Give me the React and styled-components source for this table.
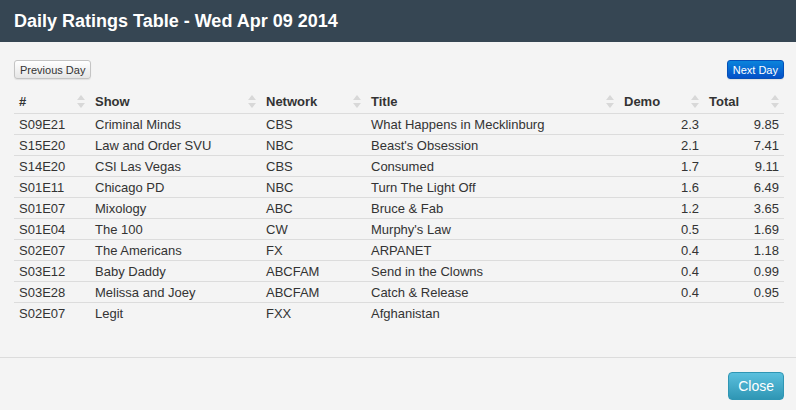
import React from 'react'
import styled, { createGlobalStyle } from 'styled-components'

const GlobalStyle = createGlobalStyle`
  html, body {
    margin: 0;
    padding: 0;
    background: #f4f4f4;
    font-family: "Liberation Sans", Arial, sans-serif;
  }
`

const Modal = styled.div`
  width: 796px;
  height: 410px;
  background: #f4f4f4;
  display: flex;
  flex-direction: column;
  overflow: hidden;
`

const Header = styled.div`
  height: 42px;
  background: #364653;
  display: flex;
  align-items: center;
  padding: 0 14px;
  box-sizing: border-box;
`

const Title = styled.h3`
  margin: 0;
  color: #fff;
  font-size: 18px;
  font-weight: bold;
`

const Body = styled.div`
  padding: 18px 12px 0 14px;
  height: 316px;
  box-sizing: border-box;
  border-bottom: 1px solid #dcdcdc;
`

const NavRow = styled.div`
  display: flex;
  justify-content: space-between;
  align-items: center;
  margin-bottom: 10px;
`

const NavButton = styled.button`
  font-family: "Liberation Sans", Arial, sans-serif;
  font-size: 11px;
  height: 19px;
  padding: 0 5px;
  border-radius: 3px;
  cursor: pointer;
  border: 1px solid ${p => (p.primary ? '#0550b8' : '#c4c4c4')};
  color: ${p => (p.primary ? '#fff' : '#333')};
  background: ${p =>
    p.primary
      ? 'linear-gradient(#0a84dc, #0450c8)'
      : 'linear-gradient(#ffffff, #e6e6e6)'};
  box-shadow: 0 1px 1px rgba(0, 0, 0, 0.08);
`

const Table = styled.table`
  width: 770px;
  border-collapse: collapse;
  table-layout: fixed;
  font-size: 13px;
  color: #333;
`

const Th = styled.th`
  text-align: left;
  font-size: 13px;
  font-weight: bold;
  color: #333;
  height: 24px;
  padding: 0 5px;
  border-bottom: 1px solid #dcdcdc;
  vertical-align: middle;
`

const ThInner = styled.div`
  display: flex;
  align-items: center;
  justify-content: space-between;
`

const Td = styled.td`
  height: 20px;
  padding: 0 5px;
  text-align: ${p => (p.num ? 'right' : 'left')};
  border-bottom: ${p => (p.last ? 'none' : '1px solid #dcdcdc')};
  white-space: nowrap;
`

const Footer = styled.div`
  flex: 1;
  display: flex;
  justify-content: flex-end;
  align-items: flex-start;
  padding: 14px 12px 0 0;
`

const CloseButton = styled.button`
  font-family: "Liberation Sans", Arial, sans-serif;
  font-size: 14px;
  color: #fff;
  height: 28px;
  padding: 0 9px;
  border: 1px solid #2f96b4;
  border-radius: 4px;
  background: linear-gradient(#5bc0de, #2f96b4);
  cursor: pointer;
`

const SortIcon = () => (
  <svg width="8" height="13" viewBox="0 0 8 13">
    <path d="M4 0 L8 5 L0 5 Z" fill="#d8d8d8" />
    <path d="M4 13 L8 8 L0 8 Z" fill="#d8d8d8" />
  </svg>
)

const columns = [
  { label: '#', width: 76 },
  { label: 'Show', width: 171 },
  { label: 'Network', width: 105 },
  { label: 'Title', width: 253 },
  { label: 'Demo', width: 85 },
  { label: 'Total', width: 80 },
]

const rows = [
  ['S09E21', 'Criminal Minds', 'CBS', 'What Happens in Mecklinburg', '2.3', '9.85'],
  ['S15E20', 'Law and Order SVU', 'NBC', "Beast's Obsession", '2.1', '7.41'],
  ['S14E20', 'CSI Las Vegas', 'CBS', 'Consumed', '1.7', '9.11'],
  ['S01E11', 'Chicago PD', 'NBC', 'Turn The Light Off', '1.6', '6.49'],
  ['S01E07', 'Mixology', 'ABC', 'Bruce & Fab', '1.2', '3.65'],
  ['S01E04', 'The 100', 'CW', "Murphy's Law", '0.5', '1.69'],
  ['S02E07', 'The Americans', 'FX', 'ARPANET', '0.4', '1.18'],
  ['S03E12', 'Baby Daddy', 'ABCFAM', 'Send in the Clowns', '0.4', '0.99'],
  ['S03E28', 'Melissa and Joey', 'ABCFAM', 'Catch & Release', '0.4', '0.95'],
  ['S02E07', 'Legit', 'FXX', 'Afghanistan', '', ''],
]

export default function App() {
  return (
    <Modal>
      <GlobalStyle />
      <Header>
        <Title>Daily Ratings Table - Wed Apr 09 2014</Title>
      </Header>
      <Body>
        <NavRow>
          <NavButton>Previous Day</NavButton>
          <NavButton primary>Next Day</NavButton>
        </NavRow>
        <Table>
          <colgroup>
            {columns.map(c => (
              <col key={c.label} style={{ width: c.width }} />
            ))}
          </colgroup>
          <thead>
            <tr>
              {columns.map(c => (
                <Th key={c.label}>
                  <ThInner>
                    <span>{c.label}</span>
                    <SortIcon />
                  </ThInner>
                </Th>
              ))}
            </tr>
          </thead>
          <tbody>
            {rows.map((r, i) => (
              <tr key={i}>
                {r.map((cell, j) => (
                  <Td key={j} num={j >= 4} last={i === rows.length - 1}>
                    {cell}
                  </Td>
                ))}
              </tr>
            ))}
          </tbody>
        </Table>
      </Body>
      <Footer>
        <CloseButton>Close</CloseButton>
      </Footer>
    </Modal>
  )
}
